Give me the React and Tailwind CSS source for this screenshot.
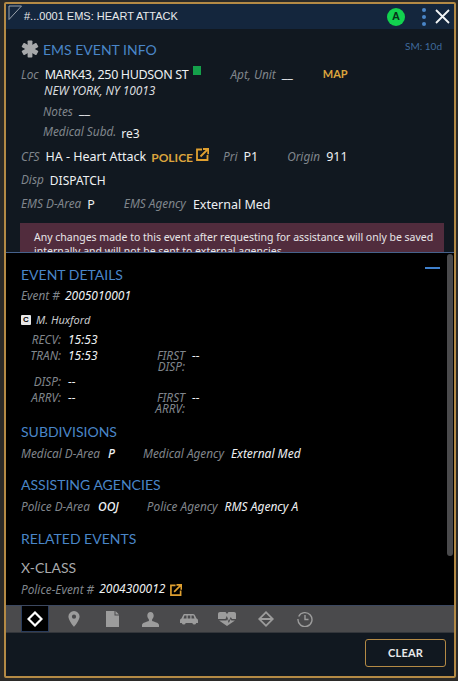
const sans = "font-['Noto_Sans','Open_Sans',sans-serif]";
const head = "font-['Lato','Liberation_Sans',sans-serif]";

function L({ children, className = "", lead = "leading-[18px]" }) {
  return <span className={`italic text-[#80868c] text-[11.800px] whitespace-nowrap ${lead} ${className}`}>{children}</span>;
}
function V({ children, className = "", size = "text-[12.500px]" }) {
  return <span className={`text-[#eef0f2] leading-[18px] whitespace-nowrap ${size} ${className}`}>{children}</span>;
}
function LinkIcon({ size = 13 }) {
  return (
    <svg width={size} height={size} viewBox="0 0 13 13" fill="none" stroke="#e0a030" strokeWidth="1.8">
      <path d="M6 1.500H1v10.500h10.500V7" />
      <path d="M4.500 8.500L11.500 1.500M7 1h5.200v5.200" />
    </svg>
  );
}
function H({ children, className = "" }) {
  return <h2 className={`${head} text-[#4a86c8] text-[14px] leading-[18px] ${className}`}>{children}</h2>;
}
function Time({ label, value, first }) {
  return (
    <div className="grid grid-cols-[40px_73px_37px_auto] gap-x-[7px] items-start">
      <L className="text-right" lead="leading-[16px]">{label}</L>
      <V className="italic" size="text-[12px]">{value}</V>
      {first ? <L className="text-right whitespace-pre-line pt-[3px]" lead="leading-[11px]">{first}</L> : <span />}
      {first ? <V className="italic" size="text-[12px]">--</V> : <span />}
    </div>
  );
}

export default function App() {
  return (
    <div className={`${sans} w-[458px] h-[681px] bg-[#2b2a28] pt-[2px] pl-[4px] pr-[2px] pb-[3px] overflow-hidden`}>
      <div className="h-full border-2 border-[#b48a45] rounded-[2px] flex flex-col bg-[#111820] overflow-hidden">
        {/* title bar */}
        <div className="relative h-[25px] shrink-0 bg-[#14263d] flex items-center pl-[18px]">
          <svg className="absolute left-[2px] top-[1px]" width="15" height="16" viewBox="0 0 15 16" fill="none" stroke="#9aa3ad" strokeWidth="1">
            <path d="M1 1h12.500L1 14.500z" />
          </svg>
          <span className="font-['Liberation_Sans',sans-serif] text-[11px] text-[#e8eaec]">#...0001 EMS: HEART ATTACK</span>
          <span className="ml-auto mr-[17px] w-[18px] h-[18px] rounded-full bg-[#12d24f] flex items-center justify-center text-[11px] font-bold text-[#07351a] font-['Liberation_Sans',sans-serif]">A</span>
          <span className="flex flex-col gap-[3px] mr-[9px]">
            <i className="block w-[4px] h-[4px] rounded-full bg-[#4a86c8]" />
            <i className="block w-[4px] h-[4px] rounded-full bg-[#4a86c8]" />
            <i className="block w-[4px] h-[4px] rounded-full bg-[#4a86c8]" />
          </span>
          <svg width="15" height="15" viewBox="0 0 15 15" stroke="#f2f4f6" strokeWidth="1.800" className="mr-[4px]">
            <path d="M1 1l13 13M14 1L1 14" />
          </svg>
        </div>

        {/* EMS info */}
        <div className="h-[223px] shrink-0 overflow-hidden pt-[9px] pl-[15px] pr-[8px]">
          <div className="flex items-center h-[21px]">
            <svg width="18" height="18" viewBox="0 0 18 18" fill="#a6a8aa" className="shrink-0">
              <rect x="6.600" y="0.500" width="4.800" height="17" rx="0.800" />
              <rect x="6.600" y="0.500" width="4.800" height="17" rx="0.800" transform="rotate(60 9 9)" />
              <rect x="6.600" y="0.500" width="4.800" height="17" rx="0.800" transform="rotate(120 9 9)" />
            </svg>
            <h1 className={`${head} ml-[4px] text-[#4a86c8] text-[14px] leading-[18px] mt-[2px]`}>EMS EVENT INFO</h1>
            <span className={`${head} ml-auto mr-[4px] mt-[-4px] text-[10px] text-[#3f6a9c]`}>SM: 10d</span>
          </div>

          <div className="flex items-start mt-[6px] h-[18px]">
            <L>Loc</L>
            <V className="ml-[6px] mt-[1px] tracking-[-0.35px]">MARK43, 250 HUDSON ST</V>
            <i className="block w-[8px] h-[9px] bg-[#14a04a] ml-[5px] mt-[1px]" />
            <L className="ml-[29px]">Apt, Unit</L>
            <V className="ml-[6px]">__</V>
            <span className={`${head} font-bold text-[11px] leading-[18px] text-[#dba43d] ml-[30px]`}>MAP</span>
          </div>
          <div className="pl-[23px] italic text-[#d8dade] text-[12px] leading-[16px] tracking-[-0.1px]">NEW YORK, NY 10013</div>
          <div className="flex pl-[22px] mt-[3px] h-[18px]">
            <L>Notes</L>
            <V className="ml-[6px] mt-[-1px]">__</V>
          </div>
          <div className="flex pl-[22px] mt-[2px] h-[18px]">
            <L>Medical Subd.</L>
            <V className="ml-[5px] mt-[3px]" size="text-[12px]">re3</V>
          </div>

          <div className="flex items-start mt-[7px] h-[18px]">
            <L>CFS</L>
            <V className="ml-[6px] mt-[1px]">HA - Heart Attack</V>
            <span className={`${head} font-bold text-[12px] leading-[18px] text-[#dba43d] ml-[5px] mt-[2px]`}>POLICE</span>
            <span className="ml-[3px] mt-[1px]"><LinkIcon /></span>
            <L className="ml-[14px]">Pri</L>
            <V className="ml-[6px] mt-[1px]">P1</V>
            <L className="ml-[29px]">Origin</L>
            <V className="ml-[6px] mt-[1px]">911</V>
          </div>
          <div className="flex items-start mt-[5px] h-[18px]">
            <L>Disp</L>
            <V className="ml-[6px] mt-[2px]" size="text-[12px]">DISPATCH</V>
          </div>
          <div className="flex items-start mt-[6px] h-[18px]">
            <L>EMS D-Area</L>
            <V className="ml-[6px] mt-[2px]">P</V>
            <L className="ml-[29px]">EMS Agency</L>
            <V className="ml-[7px] mt-[2px]">External Med</V>
          </div>
          <div className="mt-[11px] w-[424px] ml-[-1px] h-[60px] bg-[#512c3d] pt-[7px] pl-[14px] pr-[8px] text-[#e8e6e8] text-[10.500px] leading-[14px]">
            Any changes made to this event after requesting for assistance will only be saved internally and will not be sent to external agencies.
          </div>
        </div>

        {/* details */}
        <div className="relative flex-1 min-h-0 bg-black border-t border-[#46628c] pl-[15px] pt-[13px] overflow-hidden">
          <i className="absolute left-[419px] top-[14px] w-[15px] h-[2px] bg-[#3f80cc]" />
          <i className="absolute left-[441px] top-[1px] w-[6px] h-[302px] rounded-[3px] bg-[#4a4a4c]" />
          <H>EVENT DETAILS</H>
          <div className="flex items-start mt-[2px] h-[18px]">
            <L>Event #</L>
            <V className="ml-[5px] mt-[1px] italic" size="text-[12px]">2005010001</V>
          </div>
          <div className="flex items-center mt-[7px] h-[18px]">
            <span className="w-[10px] h-[10px] bg-[#e8e8e8] text-black text-[8px] font-bold leading-[10px] text-center rounded-[1px] font-['Liberation_Sans',sans-serif]">C</span>
            <span className="ml-[5px] italic text-[#c8cacc] text-[11px]">M. Huxford</span>
          </div>
          <div className="mt-[2px]">
            <div className="h-[16px]"><Time label="RECV:" value="15:53" /></div>
            <div className="h-[26px]"><Time label="TRAN:" value="15:53" first={"FIRST\nDISP:"} /></div>
            <div className="h-[16px]"><Time label="DISP:" value="--" /></div>
            <div className="h-[26px]"><Time label="ARRV:" value="--" first={"FIRST\nARRV:"} /></div>
          </div>
          <H className="mt-[8px]">SUBDIVISIONS</H>
          <div className="flex items-start mt-[3px] h-[18px]">
            <L>Medical D-Area</L>
            <V className="ml-[8px] mt-[1px] italic font-medium" size="text-[12px]">P</V>
            <L className="ml-[28px]">Medical Agency</L>
            <V className="ml-[7px] mt-[1px] italic" size="text-[12px]">External Med</V>
          </div>
          <H className="mt-[14px]">ASSISTING AGENCIES</H>
          <div className="flex items-start mt-[3px] h-[18px]">
            <L>Police D-Area</L>
            <V className="ml-[8px] mt-[1px] italic font-medium" size="text-[12px]">OOJ</V>
            <L className="ml-[28px]">Police Agency</L>
            <V className="ml-[7px] mt-[1px] italic" size="text-[12px]">RMS Agency A</V>
          </div>
          <H className="mt-[15px]">RELATED EVENTS</H>
          <div className={`${head} text-[#a8aaac] text-[14px] leading-[18px] mt-[11px]`}>X-CLASS</div>
          <div className="flex items-center mt-[3px] h-[18px]">
            <L>Police-Event #</L>
            <V className="ml-[5px] italic" size="text-[12px]">2004300012</V>
            <span className="ml-[5px] mt-[1px]"><LinkIcon size={12} /></span>
          </div>
        </div>

        {/* tabs */}
        <div className="h-[28px] shrink-0 bg-[#4a4a4c] border-t border-t-[#3c4860] border-b border-b-[#33363b] flex items-stretch pl-[15px]">
          <div className="w-[28px] bg-black flex items-center justify-center border-x border-b border-[#2a3c5c]">
            <svg width="16" height="16" viewBox="0 0 16 16" fill="none" stroke="#fff" strokeWidth="2.200"><path d="M8 1.500L14.500 8 8 14.500 1.500 8z" /></svg>
          </div>
          <div className="w-[50px] flex items-center justify-center">
            <svg width="12" height="16" viewBox="0 0 12 16" fill="#9c9c9c"><path fillRule="evenodd" d="M6 0a5.600 5.600 0 0 0-5.600 5.600C.4 9.600 6 16 6 16s5.600-6.400 5.600-10.400A5.600 5.600 0 0 0 6 0zm0 3.600a2.100 2.100 0 1 1 0 4.200 2.100 2.100 0 0 1 0-4.200z" /></svg>
          </div>
          <div className="w-[27px] flex items-center justify-center">
            <svg width="13" height="16" viewBox="0 0 13 16" fill="#9c9c9c"><path d="M0 0h8.500v4.500H13V16H0zM9.500 0L13 3.500H9.500z" /></svg>
          </div>
          <div className="w-[49px] flex items-center justify-center">
            <svg width="17" height="15" viewBox="0 0 17 15" fill="#9c9c9c"><path d="M8.500 0c2 0 3.200 1.500 3.200 3.600 0 1.600-.8 3-1.600 3.800v1.500c1.600.8 6.900 1.500 6.900 4.100v2H0v-2c0-2.600 5.300-3.300 6.900-4.100V7.400C6.100 6.600 5.300 5.200 5.300 3.600 5.300 1.500 6.500 0 8.500 0z" /></svg>
          </div>
          <div className="w-[27px] flex items-center justify-center">
            <svg width="18" height="11" viewBox="0 0 18 11" fill="#9c9c9c"><path fillRule="evenodd" d="M4 0h9c1.200 0 1.800.8 2.300 2L16.500 4.500c.9.300 1.500 1 1.500 2V9h-1.800a2 2 0 0 1-3.900 0H5.700a2 2 0 0 1-3.900 0H0V6.500c0-1 .6-1.700 1.500-2L2.700 2C3.200.8 3.800 0 4 0zM4.500 1.500L3.500 4.500h3v-3zm3.200 0v3h2.600v-3zm3.800 0v3h3l-1-3z" /></svg>
          </div>
          <div className="w-[50px] flex items-center justify-center">
            <svg width="18" height="14" viewBox="0 0 18 14" fill="#9c9c9c"><path d="M2 0h5.500L9 2l1.500-2H16c1.200 0 2 .8 2 2v5h-4l-1.200-2-2 4-2-5L7.500 7H0V2C0 .8.800 0 2 0zM1 8.500h7.500l.7-1.500 1.600 4 2-4 .5 1.500H17L9 14z" /></svg>
          </div>
          <div className="w-[28px] flex items-center justify-center">
            <svg width="16" height="16" viewBox="0 0 16 16" fill="#9c9c9c"><path fillRule="evenodd" d="M8 0l8 8-8 8-8-8zM8 2.400L3.500 7h9zM3.500 9L8 13.600 12.500 9z" /></svg>
          </div>
          <div className="w-[50px] flex items-center justify-center">
            <svg width="16" height="16" viewBox="0 0 16 16" fill="none" stroke="#9c9c9c" strokeWidth="1.400"><path d="M1.700 5.500A7 7 0 1 1 1 8" /><path d="M8 4v4.500h3.500" /></svg>
          </div>
        </div>

        {/* footer */}
        <div className="h-[43px] shrink-0 flex items-start justify-end pt-[6px] pr-[8px]">
          <button className={`${head} w-[81px] h-[28px] border border-[#b48a45] rounded-[3px] text-[#e8eaec] text-[11px] font-bold tracking-[0.2px]`}>CLEAR</button>
        </div>
      </div>
    </div>
  );
}
